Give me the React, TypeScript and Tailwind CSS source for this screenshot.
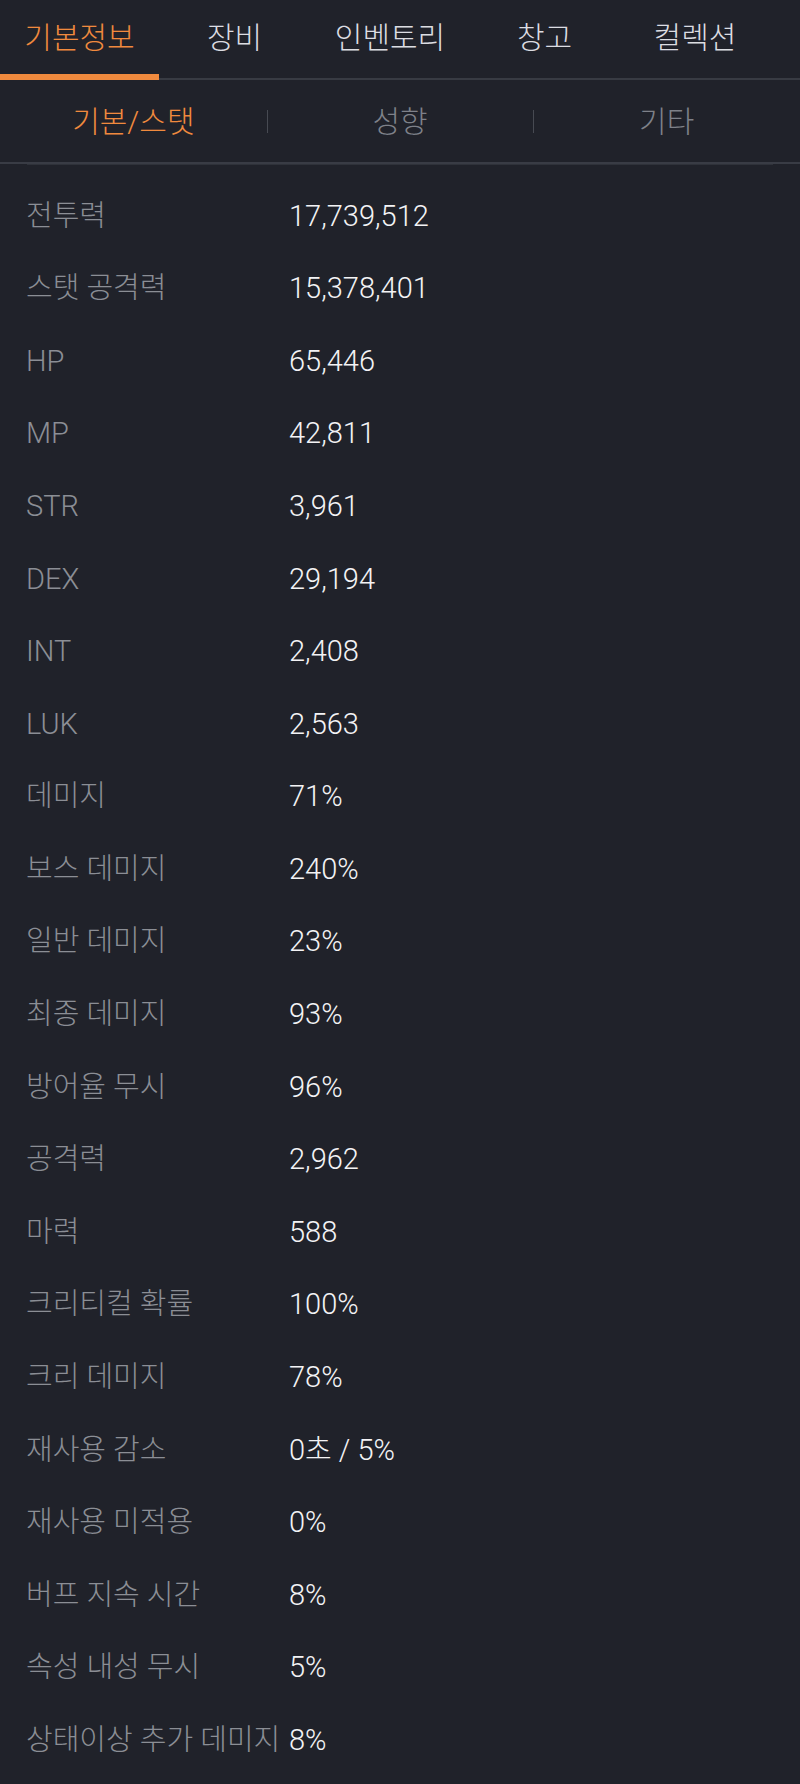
import React from 'react';

const TABS: [string, string][] = [
  ['기본정보', 'w-[159px]'],
  ['장비', 'w-[151px]'],
  ['인벤토리', 'w-[160px]'],
  ['창고', 'w-[149px]'],
  ['컬렉션', 'w-[152px]'],
];
const SUB_TABS = ['기본/스탯', '성향', '기타'];

const STATS: [string, string][] = [
  ['전투력', '17,739,512'],
  ['스탯 공격력', '15,378,401'],
  ['HP', '65,446'],
  ['MP', '42,811'],
  ['STR', '3,961'],
  ['DEX', '29,194'],
  ['INT', '2,408'],
  ['LUK', '2,563'],
  ['데미지', '71%'],
  ['보스 데미지', '240%'],
  ['일반 데미지', '23%'],
  ['최종 데미지', '93%'],
  ['방어율 무시', '96%'],
  ['공격력', '2,962'],
  ['마력', '588'],
  ['크리티컬 확률', '100%'],
  ['크리 데미지', '78%'],
  ['재사용 감소', '0초 / 5%'],
  ['재사용 미적용', '0%'],
  ['버프 지속 시간', '8%'],
  ['속성 내성 무시', '5%'],
  ['상태이상 추가 데미지', '8%'],
];

const FONT = "font-['Roboto','Noto_Sans_CJK_KR',sans-serif]";

export default function App() {
  return (
    <div className={`min-h-[1784px] w-[800px] bg-[#20222a] font-light ${FONT}`}>
      {/* main tabs */}
      <div className="relative flex h-[80px] border-b-2 border-[#383b43]">
        {TABS.map(([t, w], i) => (
          <div
            key={t}
            className={`relative flex h-full shrink-0 items-center justify-center pb-[4px] text-[30px] ${w} ${
              i === 0 ? 'text-[#f08a3e]' : 'text-[#dcdde2]'
            }`}
          >
            {t}
            {i === 0 && (
              <span className="absolute bottom-[-2px] left-0 right-0 h-[6px] bg-[#f08a3e]" />
            )}
          </div>
        ))}
      </div>

      {/* sub tabs */}
      <div className="flex h-[82px] items-center">
        {SUB_TABS.map((t, i) => (
          <div key={t} className="relative flex h-full flex-1 items-center justify-center">
            {i > 0 && <span className="absolute left-0 top-[30px] h-[23px] w-px bg-[#474a52]" />}
            <span className={`text-[30px] ${i === 0 ? 'text-[#f08a3e]' : 'text-[#7e8189]'}`}>{t}</span>
          </div>
        ))}
      </div>
      <div className="h-[2px] bg-[#393c45]" />
      <div className="mx-[27px] h-px bg-[#2f323a]" />

      {/* stats */}
      <div className="pt-[15px]">
        {STATS.map(([label, value]) => (
          <div key={label} className="flex h-[72.6px] items-center pl-[26px]">
            <div className="w-[263px] shrink-0 whitespace-nowrap text-[29px] text-[#8b8e95]">{label}</div>
            <div className="text-[29px] text-[#f3f3f5]">{value}</div>
          </div>
        ))}
      </div>
    </div>
  );
}
